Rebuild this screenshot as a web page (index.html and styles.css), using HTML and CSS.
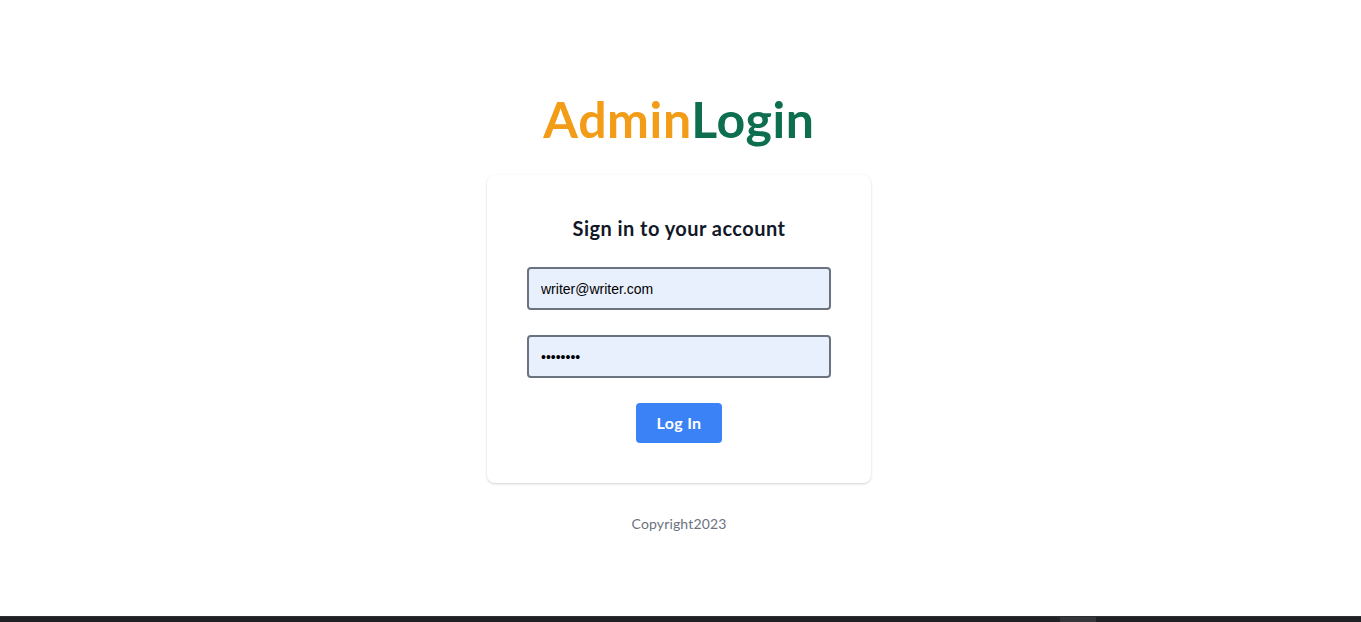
FILE: index.html
```html
<!DOCTYPE html>
<html lang="en">
<head>
<meta charset="utf-8">
<title>Admin Login</title>
<link rel="stylesheet" href="styles.css">
</head>
<body>
<main class="page">
  <h1 class="brand"><span class="brand-a">Admin</span><span class="brand-b">Login</span></h1>
  <form class="card">
    <h2 class="card-title">Sign in to your account</h2>
    <input class="field" type="email" value="writer@writer.com">
    <input class="field" type="password" value="password">
    <button class="btn" type="button">Log In</button>
  </form>
  <p class="copy">Copyright2023</p>
</main>
<div class="taskbar"><span class="task-item"></span></div>
</body>
</html>
```
FILE: styles.css
```css
* { box-sizing: border-box; }
html, body { margin: 0; padding: 0; }
body {
  background: #ffffff;
  font-family: Lato, "Noto Sans", sans-serif;
  height: 622px;
  overflow: hidden;
  display: flex;
  flex-direction: column;
}
.page {
  height: 616px;
  display: flex;
  flex-direction: column;
  align-items: center;
  padding-top: 89px;
  padding-right: 3px;
}
.brand {
  margin: 0;
  font-size: 50px;
  line-height: 60px;
  font-weight: 700;
  letter-spacing: 0.6px;
}
.brand-a { color: #f39c17; }
.brand-b { color: #0e6f50; }
.card {
  margin-top: 26px;
  width: 384px;
  height: 308px;
  background: #fff;
  border-radius: 8px;
  box-shadow: 0 1px 3px rgba(0,0,0,0.12), 0 1px 2px rgba(0,0,0,0.06);
  padding: 39px 40px 0;
  display: flex;
  flex-direction: column;
  align-items: center;
}
.card-title {
  margin: 0;
  font-size: 20px;
  line-height: 28px;
  font-weight: 700;
  letter-spacing: 0.45px;
  color: #111827;
}
.field {
  margin-top: 25px;
  width: 304px;
  height: 43px;
  border: 2px solid #6b7280;
  border-radius: 4px;
  background: #e8f0fe;
  padding: 0 12px;
  font-family: "Liberation Sans", Arial, sans-serif;
  font-size: 14px;
  color: #000;
  outline: none;
}
.btn {
  margin-top: 25px;
  width: 86px;
  height: 40px;
  border: 0;
  border-radius: 4px;
  background: #3b82f6;
  color: #fff;
  font-family: Lato, "Noto Sans", sans-serif;
  font-size: 16px;
  font-weight: 700;
  letter-spacing: 0.3px;
  padding: 0 0 2px;
}
.copy {
  margin: 31px 0 0;
  font-size: 14px;
  line-height: 20px;
  letter-spacing: 0.15px;
  color: #6b7280;
}
.taskbar {
  height: 6px;
  background: #202124;
  border-top: 1px solid #2e2f33;
  position: relative;
}
.task-item {
  position: absolute;
  left: 1060px;
  top: 0;
  width: 36px;
  height: 5px;
  background: #35363a;
}
```
